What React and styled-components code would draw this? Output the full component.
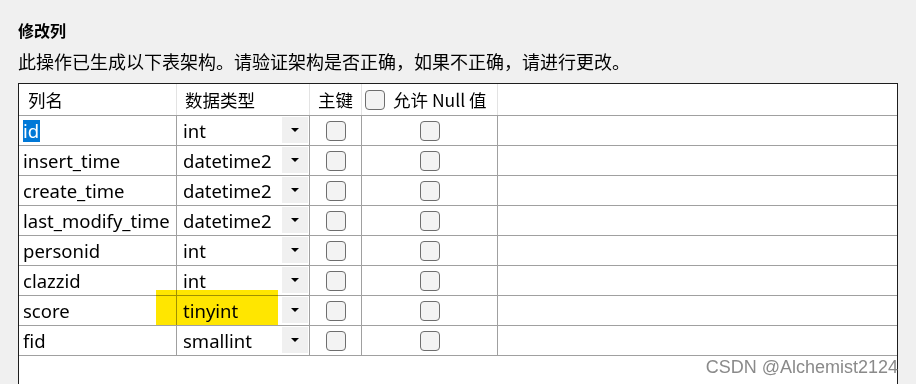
import React from "react";
import styled, { createGlobalStyle } from "styled-components";

const Global = createGlobalStyle`
  html, body { margin: 0; padding: 0; background: #f0f0f0; overflow: hidden; }
  body { font-family: "Noto Sans", "Noto Sans CJK SC", sans-serif; color: #000; }
`;

const Page = styled.div`
  position: relative;
  width: 916px;
  height: 384px;
  overflow: hidden;
  padding: 18px 0 0 18px;
  box-sizing: border-box;
`;

const Title = styled.div`
  font-family: "Noto Sans CJK SC", sans-serif;
  font-weight: 700;
  font-size: 16px;
  line-height: 24px;
  height: 24px;
`;

const Desc = styled.div`
  font-family: "Noto Sans CJK SC", sans-serif;
  font-size: 18px;
  line-height: 26px;
  margin-top: 6px;
  white-space: nowrap;
`;

const Table = styled.div`
  position: relative;
  margin-top: 9px;
  width: 880px;
  height: 320px;
  box-sizing: border-box;
  border: 1px solid #1e1e1e;
  border-bottom: none;
  background: #fff;
`;

const Row = styled.div`
  display: flex;
  height: ${(p) => (p.$header ? 32 : 30)}px;
  box-sizing: border-box;
  border-bottom: 1px solid #a0a0a0;
`;

const Cell = styled.div`
  flex: ${(p) => (p.$w ? `0 0 ${p.$w}px` : "1 1 auto")};
  box-sizing: border-box;
  border-right: ${(p) => (p.$last ? "none" : `1px solid ${p.$header ? "#e3e3e3" : "#a0a0a0"}`)};
  display: flex;
  align-items: center;
  justify-content: ${(p) => (p.$center ? "center" : "flex-start")};
  padding-left: ${(p) => p.$pl || 0}px;
  font-size: 18.5px;
  white-space: nowrap;
  position: relative;
`;

const HeadText = styled.span`
  font-family: "Noto Sans CJK SC", "Noto Sans", sans-serif;
  font-size: 17.5px;
  display: flex;
  align-items: center;
  gap: 8px;
`;

const Selected = styled.span`
  background: #0078d7;
  color: #fff;
  line-height: 22px;
  padding-right: 1px;
`;

const DropBtn = styled.div`
  position: absolute;
  right: 1px;
  top: 1px;
  width: 26px;
  height: 26px;
  background: #f0f0f0;
  display: flex;
  align-items: center;
  justify-content: center;
  &::after {
    content: "";
    width: 0;
    height: 0;
    border-left: 4px solid transparent;
    border-right: 4px solid transparent;
    border-top: 4px solid #000;
  }
`;

const Check = styled.span`
  display: inline-block;
  width: 18px;
  height: 18px;
  border: 1px solid #6e6e6e;
  border-radius: 4px;
  background: #f3f3f3;
`;

const Highlight = styled.div`
  position: absolute;
  left: 137px;
  top: 206px;
  width: 122px;
  height: 35px;
  background: #ffe600;
  mix-blend-mode: multiply;
  pointer-events: none;
`;

const Watermark = styled.div`
  position: absolute;
  right: 18px;
  top: 357px;
  font-family: "Liberation Sans", Arial, sans-serif;
  font-size: 18px;
  color: #8a8a8a;
  white-space: nowrap;
`;

const rows = [
  ["id", "int"],
  ["insert_time", "datetime2"],
  ["create_time", "datetime2"],
  ["last_modify_time", "datetime2"],
  ["personid", "int"],
  ["clazzid", "int"],
  ["score", "tinyint"],
  ["fid", "smallint"],
];

export default function App() {
  return (
    <>
      <Global />
      <Page>
        <Title>修改列</Title>
        <Desc>此操作已生成以下表架构。请验证架构是否正确，如果不正确，请进行更改。</Desc>
        <Table>
          <Row $header>
            <Cell $header $w={158} $pl={9}><HeadText>列名</HeadText></Cell>
            <Cell $header $w={133} $pl={8}><HeadText>数据类型</HeadText></Cell>
            <Cell $header $w={52} $pl={8}><HeadText>主键</HeadText></Cell>
            <Cell $header $w={136} $pl={3}><HeadText><Check />允许 Null 值</HeadText></Cell>
            <Cell $header $last />
          </Row>
          {rows.map(([name, type], i) => (
            <Row key={name}>
              <Cell $w={158} $pl={4}>{i === 0 ? <Selected>{name}</Selected> : name}</Cell>
              <Cell $w={133} $pl={6}>{type}<DropBtn /></Cell>
              <Cell $w={52} $center><Check /></Cell>
              <Cell $w={136} $center><Check /></Cell>
              <Cell $last />
            </Row>
          ))}
          <Highlight />
        </Table>
        <Watermark>CSDN @Alchemist2124</Watermark>
      </Page>
    </>
  );
}
